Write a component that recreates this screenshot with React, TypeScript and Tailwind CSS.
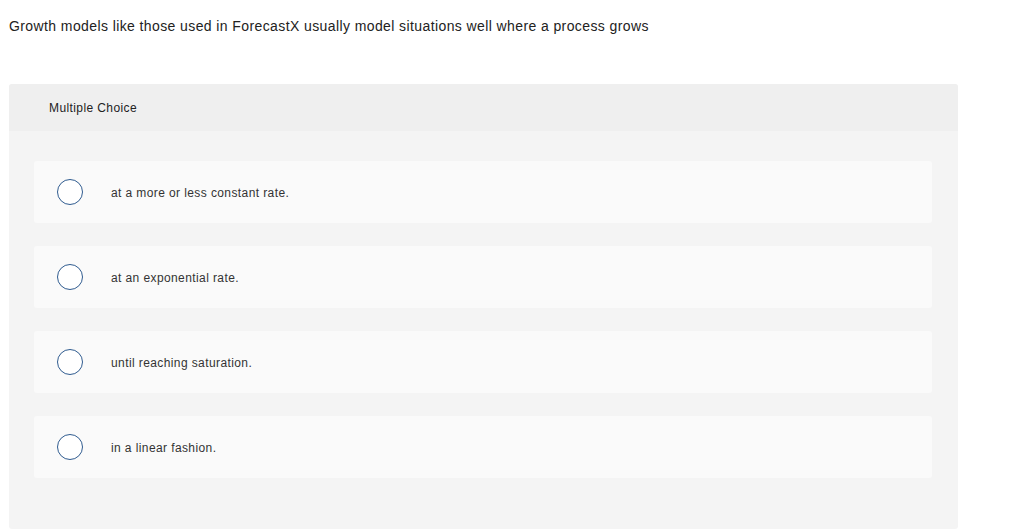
const options = [
  'at a more or less constant rate.',
  'at an exponential rate.',
  'until reaching saturation.',
  'in a linear fashion.',
]

function Radio() {
  return <span className="block h-[26px] w-[26px] shrink-0 rounded-full border border-[#2f5b8f] bg-white" />
}

export default function App() {
  return (
    <div className="min-h-[530px] bg-white font-['Liberation_Sans',Arial,sans-serif] tracking-[0.4px] text-[#333]">
      <p className="px-[9px] pt-[17px] text-[14px] leading-[18px] text-[#222]">
        Growth models like those used in ForecastX usually model situations well where a process grows
      </p>

      <div className="ml-[9px] mt-[49px] w-[949px] overflow-hidden rounded-[3px] bg-[#f4f4f4]">
        <div className="flex h-[47px] items-center bg-[#efefef] px-[40px] pt-px text-[12px] text-[#222]">
          Multiple Choice
        </div>
        <div className="flex flex-col gap-[23px] px-[25px] pb-[51px] pt-[30px]">
          {options.map(o => (
            <label
              key={o}
              className="flex h-[62px] w-[898px] items-center rounded-[3px] bg-[#fafafa] pl-[23px]"
            >
              <Radio />
              <span className="ml-[28px] pt-px text-[12px] text-[#333]">{o}</span>
            </label>
          ))}
        </div>
      </div>
    </div>
  )
}
